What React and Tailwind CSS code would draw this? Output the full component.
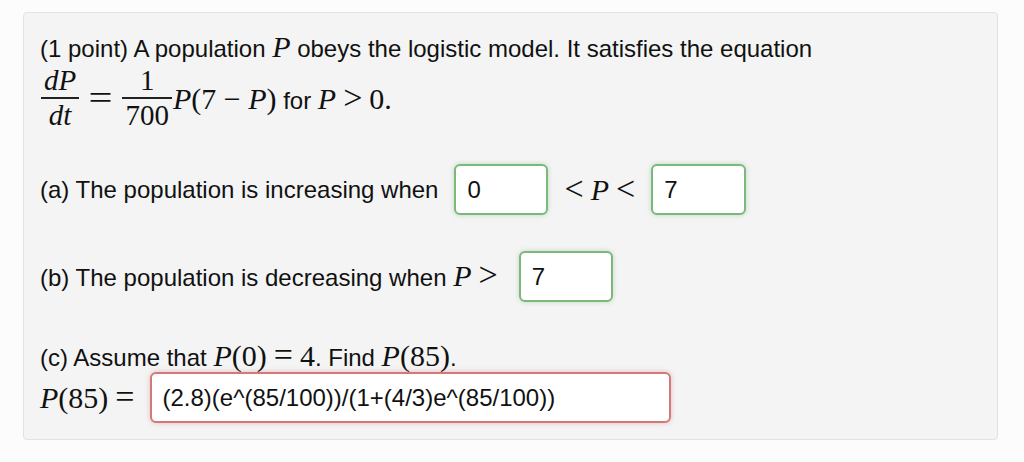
import React from "react";

const sans = { fontFamily: '"Liberation Sans", Arial, sans-serif' };

function M({ children, italic }) {
  return (
    <span
      className={"font-['Liberation_Serif',serif] text-[30px] " + (italic ? "italic" : "")}
    >
      {children}
    </span>
  );
}

// relation signs are drawn larger, as MathJax does
function Rel({ children, wide }) {
  return (
    <span
      className={
        "inline-block font-['Liberation_Serif',serif] text-[34px] leading-none " +
        (wide ? "mx-[11px] scale-x-125" : "mx-[7px]")
      }
    >
      {children}
    </span>
  );
}

function Frac({ top, bottom, italic }) {
  return (
    <span className="inline-flex flex-col items-center font-['Liberation_Serif',serif] text-[29px] leading-[33px] px-[1px]">
      <span className={"px-[3px] " + (italic ? "italic" : "")}>{top}</span>
      <span className="block h-[1.5px] w-full bg-[#222]" />
      <span className={"px-[3px] " + (italic ? "italic" : "")}>{bottom}</span>
    </span>
  );
}

function Box({ value, tone, width }) {
  const cls =
    tone === "red"
      ? "border-[#d07a7a] shadow-[0_0_5px_rgba(207,80,80,0.35)]"
      : "border-[#7cb87c] shadow-[0_0_5px_rgba(90,170,90,0.35)]";
  return (
    <span
      className={
        "inline-flex items-center h-[51px] bg-white border-2 rounded-[6px] px-[11px] text-[#111] " +
        cls +
        " " +
        width
      }
    >
      {value}
    </span>
  );
}

export default function App() {
  return (
    <div className="min-h-screen bg-[#fcfcfc] pt-[12px] px-[23px]" style={sans}>
      <div className="w-[975px] h-[428px] bg-[#f4f4f4] border border-[#e2e2e2] rounded-[4px] pl-[16px] pt-[20px] text-[24px] text-[#111]">
        <div className="leading-[28px] h-[28px] whitespace-nowrap">
          (1 point) A population <M italic>P</M> obeys the logistic model. It satisfies the equation
        </div>
        <div className="flex items-center h-[74px] whitespace-nowrap">
          <Frac top="dP" bottom="dt" italic />
          <Rel wide>=</Rel>
          <Frac top="1" bottom="700" />
          <span className="leading-[30px]">
            <M italic>P</M>
            <M>(7&nbsp;−&nbsp;</M>
            <M italic>P</M>
            <M>)</M>
            <span>&nbsp;for&nbsp;</span>
            <M italic>P</M>
            <Rel>&gt;</Rel>
            <M>0.</M>
          </span>
        </div>
        <div className="flex items-center mt-[29px] whitespace-nowrap">
          <span>(a) The population is increasing when</span>
          <Box value="0" width="w-[94px] ml-[16px]" />
          <span className="mx-[9px] leading-[30px]">
            <Rel>&lt;</Rel>
            <M italic>P</M>
            <Rel>&lt;</Rel>
          </span>
          <Box value="7" width="w-[95px]" />
        </div>
        <div className="flex items-center mt-[36px] whitespace-nowrap">
          <span className="leading-[26px] -mt-[3px]">
            (b) The population is decreasing when&nbsp;
            <M italic>P</M>
            <Rel>&gt;</Rel>
          </span>
          <Box value="7" width="w-[94px] ml-[14px]" />
        </div>
        <div className="mt-[36px] h-[30px] leading-[26px] whitespace-nowrap">
          (c) Assume that <M italic>P</M>
          <M>(0)</M>
          <Rel>=</Rel>
          <M>4</M>. Find <M italic>P</M>
          <M>(85)</M>.
        </div>
        <div className="flex items-center mt-[4px] whitespace-nowrap">
          <span className="leading-[30px]">
            <M italic>P</M>
            <M>(85)</M>
            <Rel>=</Rel>
          </span>
          <Box value="(2.8)(e^(85/100))/(1+(4/3)e^(85/100))" tone="red" width="w-[521px] ml-[8px] text-[24px]" />
        </div>
      </div>
    </div>
  );
}
